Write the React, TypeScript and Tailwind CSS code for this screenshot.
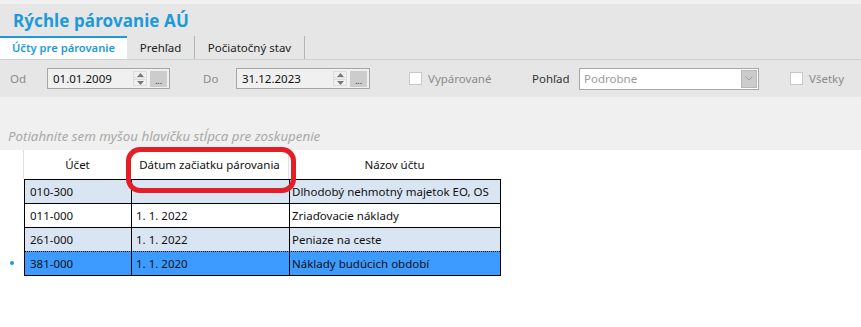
import React from "react";

const font = { fontFamily: '"Noto Sans", "Open Sans", sans-serif' };

type Row = { ucet: string; datum: string; nazov: string; tone: "alt" | "plain" | "sel" };

const rows: Row[] = [
  { ucet: "010-300", datum: "", nazov: "Dlhodobý nehmotný majetok EO, OS", tone: "alt" },
  { ucet: "011-000", datum: "1. 1. 2022", nazov: "Zriaďovacie náklady", tone: "plain" },
  { ucet: "261-000", datum: "1. 1. 2022", nazov: "Peniaze na ceste", tone: "alt" },
  { ucet: "381-000", datum: "1. 1. 2020", nazov: "Náklady budúcich období", tone: "sel" },
];

function DateBox({ value, width }: { value: string; width: string }) {
  return (
    <div className={`flex h-[21px] items-center border border-[#a6a6a6] bg-[#f0f0f0] pl-[5px] pr-[2px] ${width}`}>
      <span className="flex-1 text-[11.5px] text-[#111]">{value}</span>
      <div className="mr-[3px] flex flex-col gap-[1px]">
        <div className="flex h-[7px] w-[14px] items-center justify-center border border-[#dcdcdc]">
          <svg width="7" height="4" viewBox="0 0 7 4"><path d="M0 4 L3.5 0 L7 4 Z" fill="#7a7a7a" /></svg>
        </div>
        <div className="flex h-[7px] w-[14px] items-center justify-center border border-[#dcdcdc]">
          <svg width="7" height="4" viewBox="0 0 7 4"><path d="M0 0 L3.5 4 L7 0 Z" fill="#7a7a7a" /></svg>
        </div>
      </div>
      <div className="flex h-[16px] w-[17px] items-end justify-center bg-[#cccccc] pb-[2px] text-[9px] leading-none text-[#333]">...</div>
    </div>
  );
}

function Check({ label }: { label: string }) {
  return (
    <div className="flex items-center gap-[6px]">
      <div className="h-[13px] w-[13px] border border-[#c8c8c8] bg-white" />
      <span className="text-[11.5px] text-[#8c8c8c]">{label}</span>
    </div>
  );
}

export default function App() {
  return (
    <div className="h-[327px] w-[861px] overflow-hidden bg-white" style={font}>
      <div className="h-[4px] bg-[#f0f0f0]" />
      <div className="flex h-[32px] items-center bg-[#e6e6e6] pl-[13px] pt-[2px]">
        <h1 className="text-[17px] font-bold tracking-[0.1px] text-[#1b9bdc]">Rýchle párovanie AÚ</h1>
      </div>
      <div className="flex h-[24px] border-b border-[#d0d0d0] bg-[#e6e6e6]">
        <div className="flex w-[127px] items-center justify-center border-t-2 border-[#1b9bdc] bg-white text-[11.2px] font-semibold text-[#1b9bdc]">
          Účty pre párovanie
        </div>
        <div className="flex w-[68px] items-center justify-center border-r border-[#b4b4b4] text-[11.5px] text-[#222]">Prehľad</div>
        <div className="flex w-[110px] items-center justify-center border-r border-[#b4b4b4] text-[11.5px] text-[#222]">Počiatočný stav</div>
      </div>
      <div className="flex h-[37px] items-center bg-[#e6e6e6] text-[11.5px]">
        <span className="ml-[10px] w-[37px] text-[#8c8c8c]">Od</span>
        <DateBox value="01.01.2009" width="w-[123px]" />
        <span className="ml-[33px] w-[33px] text-[#8c8c8c]">Do</span>
        <DateBox value="31.12.2023" width="w-[134px]" />
        <div className="ml-[39px] w-[123px]"><Check label="Vypárované" /></div>
        <span className="w-[47px] text-[#333]">Pohľad</span>
        <div className="flex h-[22px] w-[180px] items-center border border-[#a6a6a6] bg-white pl-[4px] pr-[1px]">
          <span className="flex-1 text-[11.5px] text-[#9a9a9a]">Podrobne</span>
          <div className="flex h-[18px] w-[16px] items-center justify-center border border-[#b8b8b8] bg-[#cccccc]">
            <svg width="8" height="5" viewBox="0 0 8 5"><path d="M0.5 0.5 L4 4 L7.5 0.5" stroke="#a0a0a0" fill="none" /></svg>
          </div>
        </div>
        <div className="ml-[31px]"><Check label="Všetky" /></div>
      </div>
      <div className="flex h-[53px] items-end bg-[#f0f0f0] pb-[3px] pl-[8px]">
        <span className="text-[13.3px] italic text-[#a8a8a8]">Potiahnite sem myšou hlavičku stĺpca pre zoskupenie</span>
      </div>
      <div className="relative">
        <div className="flex h-[29px] w-[500px] text-[11.5px] text-[#111]">
          <div className="w-[24px] border-r border-[#e0e0e0]" />
          <div className="flex w-[107px] items-center justify-center">Účet</div>
          <div className="flex w-[158px] items-center justify-center border-r border-[#e0e0e0]">Dátum začiatku párovania</div>
          <div className="flex flex-1 items-center justify-center">Názov účtu</div>
        </div>
        <div className="flex">
          <div className="flex w-[24px] flex-col">
            {rows.map((r) => (
              <div key={r.ucet} className="flex h-[24px] items-center justify-center">
                {r.tone === "sel" && <div className="h-[4px] w-[4px] rounded-full bg-[#1b9bdc]" />}
              </div>
            ))}
          </div>
          <div className="w-[477px] border-b border-l border-r border-black">
            {rows.map((r) => (
              <div
                key={r.ucet}
                className={`flex h-[24px] text-[11.5px] text-[#111] ${r.tone === "sel" ? "border-t border-dotted border-black" : "border-t border-black"} ${
                  r.tone === "alt" ? "bg-[#d9e5f2]" : r.tone === "sel" ? "bg-[#3d9bff]" : "bg-white"
                }`}
              >
                <div className="flex w-[107px] items-center border-r border-black pl-[5px]">{r.ucet}</div>
                <div className="flex w-[158px] items-center border-r border-black pl-[4px]">{r.datum}</div>
                <div className="flex flex-1 items-center pl-[2px]">{r.nazov}</div>
              </div>
            ))}
          </div>
        </div>
        <div className="pointer-events-none absolute left-[126px] top-[-3px] h-[46px] w-[170px] rounded-[14px] border-[5px] border-[#e41e26]" />
      </div>
    </div>
  );
}
